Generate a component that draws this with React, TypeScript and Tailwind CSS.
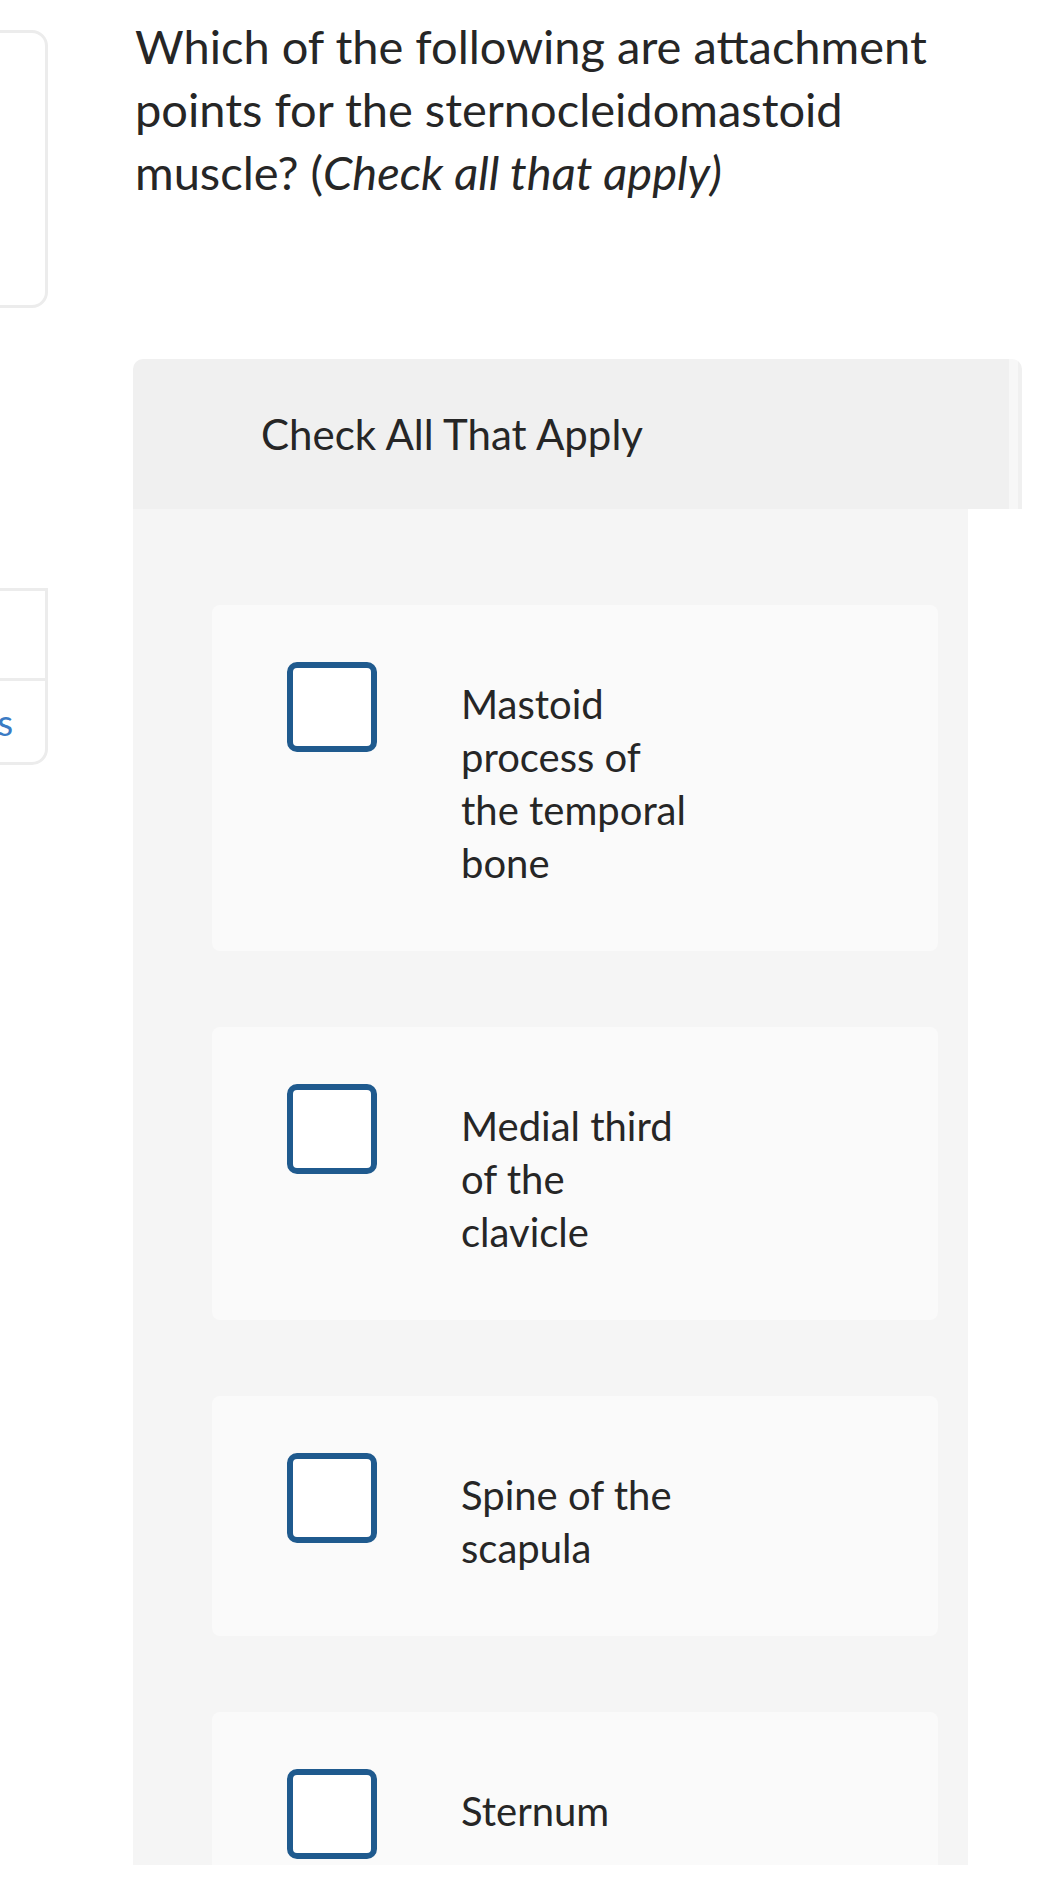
const answers = [
  "Mastoid process of the temporal bone",
  "Medial third of the clavicle",
  "Spine of the scapula",
  "Sternum",
];

function AnswerCard({ label }: { label: string }) {
  return (
    <div className="flex shrink-0 rounded-[8px] bg-[#fafafa] pb-[61px] pl-[75px] pt-[73px]">
      <span
        role="checkbox"
        aria-checked="false"
        className="-mt-[16px] block h-[90px] w-[90px] shrink-0 rounded-[10px] border-[6px] border-[#1f5a8e] bg-white"
      />
      <span className="ml-[84px] w-[240px] text-[40px] leading-[53px]">{label}</span>
    </div>
  );
}

export default function App() {
  return (
    <div className="h-[1889px] w-[1054px] overflow-hidden bg-white font-['Lato',sans-serif] text-[#262626]">
      <div className="flex">
        <aside className="w-[48px] shrink-0">
          <div className="ml-[-252px] mt-[30px] h-[278px] w-[300px] rounded-[16px] border-[3px] border-[#ececec]" />
          <div className="ml-[-252px] mt-[280px] w-[300px] rounded-b-[16px] border-[3px] border-[#ececec]">
            <div className="h-[87px]" />
            <div className="flex h-[84px] items-center justify-end border-t-[3px] border-[#ececec] pr-[32px] text-[36px] text-[#3b7bc4]">
              Resources
            </div>
          </div>
        </aside>

        <main className="ml-[85px] w-[889px]">
          <p className="w-[835px] pl-[2px] pt-[15px] text-[47px] leading-[63px]">
            Which of the following are attachment points for the sternocleidomastoid muscle? (
            <em>Check all that apply)</em>
          </p>

          <div className="mt-[155px] flex h-[150px] overflow-hidden rounded-t-[10px]">
            <div className="flex flex-1 items-center bg-[#f0f0f0] pl-[128px] text-[42px]">
              Check All That Apply
            </div>
            <div className="w-[9px] bg-[#f7f7f7]" />
            <div className="w-[4px] bg-[#f0f0f0]" />
          </div>

          <div className="flex h-[1356px] w-[835px] flex-col gap-[76px] overflow-hidden bg-[#f5f5f5] pl-[79px] pr-[30px] pt-[96px]">
            {answers.map((a) => (
              <AnswerCard key={a} label={a} />
            ))}
          </div>
        </main>
      </div>
    </div>
  );
}
